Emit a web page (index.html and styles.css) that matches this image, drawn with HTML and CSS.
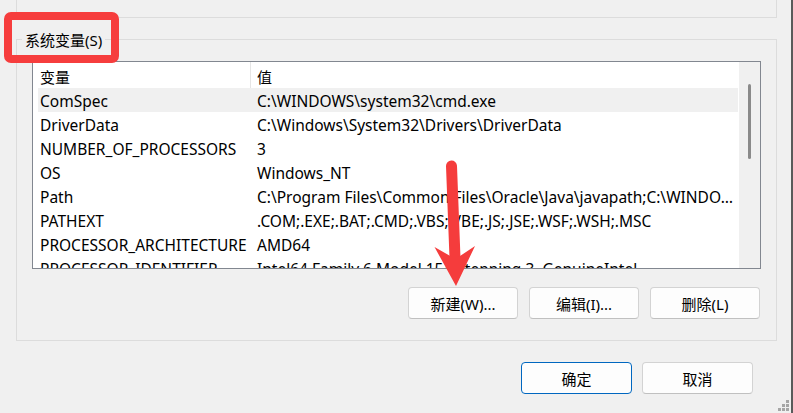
FILE: index.html
```html
<!DOCTYPE html>
<html lang="zh-CN">
<head>
<meta charset="utf-8">
<title>系统变量</title>
<link rel="stylesheet" href="styles.css">
</head>
<body>
<div class="window">
  <div class="prev-group"></div>
  <section class="group">
    <div class="group-title">系统变量(S)</div>
    <div class="listview">
      <div class="list-main">
        <div class="list-header">
          <div class="hcol1">变量</div>
          <div class="hcol2">值</div>
        </div>
        <div class="row sel"><div class="col1">ComSpec</div><div class="col2">C:\WINDOWS\system32\cmd.exe</div></div>
        <div class="row"><div class="col1">DriverData</div><div class="col2">C:\Windows\System32\Drivers\DriverData</div></div>
        <div class="row"><div class="col1">NUMBER_OF_PROCESSORS</div><div class="col2">3</div></div>
        <div class="row"><div class="col1">OS</div><div class="col2">Windows_NT</div></div>
        <div class="row"><div class="col1">Path</div><div class="col2">C:\Program Files\Common Files\Oracle\Java\javapath;C:\WINDOWS\system32;C:\WINDOWS</div></div>
        <div class="row"><div class="col1">PATHEXT</div><div class="col2">.COM;.EXE;.BAT;.CMD;.VBS;.VBE;.JS;.JSE;.WSF;.WSH;.MSC</div></div>
        <div class="row"><div class="col1">PROCESSOR_ARCHITECTURE</div><div class="col2">AMD64</div></div>
        <div class="row"><div class="col1">PROCESSOR_IDENTIFIER</div><div class="col2">Intel64 Family 6 Model 154 Stepping 3, GenuineIntel</div></div>
      </div>
      <div class="scrollbar"><div class="thumb"></div></div>
    </div>
    <div class="btn-row">
      <button class="btn">新建(W)...</button>
      <button class="btn">编辑(I)...</button>
      <button class="btn">删除(L)</button>
    </div>
  </section>
  <div class="dialog-buttons">
    <button class="btn wide default">确定</button>
    <button class="btn wide">取消</button>
  </div>
</div>
<div class="highlight"></div>
<svg class="arrow" width="60" height="140" viewBox="425 155 60 140">
  <line x1="451.5" y1="166" x2="455" y2="258" stroke="#f53c3c" stroke-width="11" stroke-linecap="round"/>
  <polygon points="434.5,247 452,257 458.5,257 475,246 456,286" fill="#f53c3c"/>
</svg>
<svg class="grip" width="14" height="14" viewBox="0 0 14 14">
  <g fill="#a6a6a6">
    <rect x="9" y="1" width="3" height="3"/>
    <rect x="5" y="5" width="3" height="3"/>
    <rect x="9" y="5" width="3" height="3"/>
    <rect x="1" y="9" width="3" height="3"/>
    <rect x="5" y="9" width="3" height="3"/>
    <rect x="9" y="9" width="3" height="3"/>
  </g>
</svg>
</body>
</html>
```

FILE: styles.css
```css
html, body {
  margin: 0;
  padding: 0;
}

body {
  width: 793px;
  height: 413px;
  overflow: hidden;
  position: relative;
  background: #f0f0f0;
  color: #000;
  font-family: "Noto Sans", "Noto Sans CJK SC", sans-serif;
}

.window {
  box-sizing: border-box;
  width: 793px;
  height: 413px;
  padding: 0 14px 0 16px;
  border-right: 2px solid #5a5a5a;
}

.prev-group {
  height: 17px;
  border: 1px solid #dcdcdc;
  border-top: none;
}

.group {
  margin-top: 21px;
  border: 1px solid #dcdcdc;
}

.group-title {
  width: fit-content;
  margin: -11px 0 0 5px;
  padding: 0 3px;
  height: 22px;
  line-height: 22px;
  font-size: 15px;
  background: #f0f0f0;
}

.listview {
  box-sizing: border-box;
  height: 208px;
  margin: 10px 15px 0 15px;
  border: 1px solid #828790;
  background: #fff;
  display: flex;
  overflow: hidden;
}

.list-main {
  flex: 1;
  min-width: 0;
  overflow: hidden;
}

.list-header {
  display: flex;
  height: 26px;
  font-size: 15px;
}

.hcol1 {
  box-sizing: border-box;
  width: 218px;
  padding: 2px 0 0 7px;
  border-right: 1px solid #e5e5e5;
  display: flex;
  align-items: center;
}

.hcol2 {
  padding: 2px 0 0 6px;
  display: flex;
  align-items: center;
}

.row {
  box-sizing: border-box;
  display: flex;
  align-items: center;
  height: 24px;
  padding-top: 2px;
  margin-left: 5px;
  font-size: 15.5px;
  white-space: nowrap;
}

.row.sel {
  background: #f0f0f0;
}

.col1 {
  box-sizing: border-box;
  width: 213px;
  padding-left: 2px;
  flex: none;
  overflow: hidden;
}

.col2 {
  flex: 1;
  min-width: 0;
  padding: 0 4px 0 6px;
  overflow: hidden;
  text-overflow: ellipsis;
}

.scrollbar {
  width: 21px;
  margin-left: 1px;
  background: #f0f0f0;
}

.thumb {
  width: 3px;
  height: 75px;
  margin: 22px 0 0 9px;
  border-radius: 2px;
  background: #8a8a8a;
}

.btn-row {
  display: flex;
  justify-content: flex-end;
  gap: 11px;
  margin: 18px 16px 21px 0;
}

.btn {
  box-sizing: border-box;
  width: 110px;
  height: 32px;
  padding: 0;
  font-family: "Noto Sans", "Noto Sans CJK SC", sans-serif;
  font-size: 15px;
  color: #000;
  background: #fdfdfd;
  border: 1px solid #d3d3d3;
  border-bottom-color: #c0c0c0;
  border-radius: 4px;
}

.btn.wide {
  width: 111px;
}

.btn.default {
  border: 1px solid #0067c0;
}

.dialog-buttons {
  display: flex;
  justify-content: flex-end;
  gap: 10px;
  margin: 21px 24px 0 0;
}

.highlight {
  position: absolute;
  left: 4px;
  top: 12px;
  width: 115px;
  height: 51px;
  box-sizing: border-box;
  border: 8px solid #f63d3d;
  border-radius: 7px;
}

.arrow {
  position: absolute;
  left: 425px;
  top: 155px;
}

.grip {
  position: absolute;
  right: 2px;
  bottom: 0;
}
```
